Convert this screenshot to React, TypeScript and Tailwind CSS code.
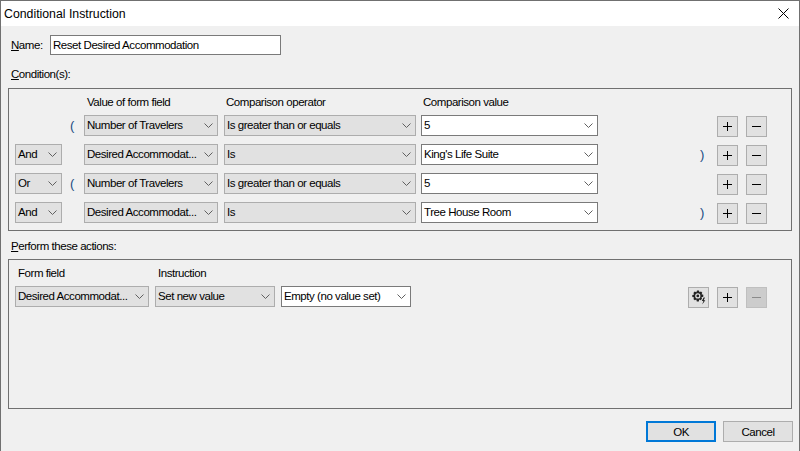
import type { ReactNode } from "react";

function Chevron() {
  return (
    <svg width="9" height="5" viewBox="0 0 9 5" className="shrink-0">
      <path d="M0.5 0.5 L4.5 4.5 L8.5 0.5" fill="none" stroke="#606060" strokeWidth="1" />
    </svg>
  );
}

function Select({ value, width, white }: { value: string; width: string; white?: boolean }) {
  return (
    <div
      className={`flex h-[21px] shrink-0 items-center justify-between border pl-[2px] pr-[4px] ${width} ${
        white ? "border-[#7a7a7a] bg-white" : "border-[#adadad] bg-[#e1e1e1]"
      }`}
    >
      <span className="-translate-y-px whitespace-nowrap">{value}</span>
      <Chevron />
    </div>
  );
}

function IconButton({ children, disabled }: { children: ReactNode; disabled?: boolean }) {
  return (
    <div
      className={`flex h-[21px] w-[21px] shrink-0 items-center justify-center border ${
        disabled ? "border-[#bfbfbf] bg-[#cccccc]" : "border-[#adadad] bg-[#e1e1e1]"
      }`}
    >
      {children}
    </div>
  );
}

function Plus() {
  return (
    <svg width="9" height="9" viewBox="0 0 9 9">
      <path d="M4.5 0 V9 M0 4.5 H9" stroke="#000" strokeWidth="1" />
    </svg>
  );
}

function Minus({ color = "#000" }: { color?: string }) {
  return (
    <svg width="9" height="9" viewBox="0 0 9 9">
      <path d="M0 4.5 H9" stroke={color} strokeWidth="1" />
    </svg>
  );
}

function Gear() {
  return (
    <svg width="15" height="15" viewBox="0 0 15 15">
      <path
        d="M6 0.5 H8 L8.4 2.2 L10 1.4 L11.3 2.7 L10.5 4.2 L12.3 4.7 V6.8 L10.5 7.3 L11 8.8 L9.6 10.2 L8.2 9.5 L7.8 11.4 H5.8 L5.3 9.6 L3.8 10.3 L2.4 9 L3.2 7.4 L1.3 7 V4.9 L3.1 4.4 L2.4 2.9 L3.7 1.5 L5.4 2.3 Z"
        fill="#222"
      />
      <circle cx="6.8" cy="5.9" r="2.6" fill="#e1e1e1" />
      <circle cx="6.8" cy="5.9" r="1.4" fill="#222" />
      <path d="M12.6 7.6 L10.8 11 H12.4 L11.2 14.5 L14.3 10.2 H12.7 L14 7.6 Z" fill="#222" />
    </svg>
  );
}

type Row = {
  join?: string;
  open?: boolean;
  field: string;
  op: string;
  value: string;
  close?: boolean;
};

const rows: Row[] = [
  { open: true, field: "Number of Travelers", op: "Is greater than or equals", value: "5" },
  { join: "And", field: "Desired Accommodat...", op: "Is", value: "King's Life Suite", close: true },
  { join: "Or", open: true, field: "Number of Travelers", op: "Is greater than or equals", value: "5" },
  { join: "And", field: "Desired Accommodat...", op: "Is", value: "Tree House Room", close: true },
];

export default function App() {
  return (
    <div
      className="flex h-[451px] w-[800px] flex-col overflow-hidden border border-b-0 border-[#707070] bg-[#f0f0f0] text-[11.5px] leading-[16px] tracking-[-0.45px] text-black"
      style={{ fontFamily: '"Liberation Sans", sans-serif' }}
    >
      <header className="flex h-[25px] shrink-0 items-center justify-between bg-white pl-[3px] pr-[10px] text-[12.3px] tracking-normal">
        <span>Conditional Instruction</span>
        <svg width="11" height="11" viewBox="0 0 11 11">
          <path d="M0.5 0.5 L10.5 10.5 M10.5 0.5 L0.5 10.5" stroke="#000" strokeWidth="1" />
        </svg>
      </header>

      <div className="flex items-center pl-[10px] pt-[9px]">
        <span className="w-[39px]">
          <span className="underline">N</span>ame:
        </span>
        <div className="flex h-[20px] w-[231px] items-center border border-[#7a7a7a] bg-white pl-[2px]">
          Reset Desired Accommodation
        </div>
      </div>

      <div className="pl-[10px] pt-[11px]">
        <span className="underline">C</span>ondition(s):
      </div>

      <section className="ml-[7px] mr-[7px] mt-[6px] h-[143px] border border-[#707070] pl-[6px] pt-[2px]">
        <div className="flex h-[21px] items-center">
          <span className="ml-[72px] w-[139px]">Value of form field</span>
          <span className="w-[197px]">Comparison operator</span>
          <span>Comparison value</span>
        </div>
        <div className="flex flex-col gap-2 pt-[3px]">
          {rows.map((row, i) => (
            <div key={i} className="flex h-[21px] items-center">
              <div className="w-[47px] shrink-0">
                {row.join && <Select value={row.join} width="w-[47px]" />}
              </div>
              <span className="w-[22px] shrink-0 pl-[8px] text-[13px] text-[#174a80]">{row.open ? "(" : ""}</span>
              <Select value={row.field} width="w-[134px]" />
              <div className="w-[6px] shrink-0" />
              <Select value={row.op} width="w-[192px]" />
              <div className="w-[5px] shrink-0" />
              <Select value={row.value} width="w-[177px]" white />
              <span className="w-[119px] shrink-0 pr-[13px] text-right text-[13px] text-[#174a80]">{row.close ? ")" : ""}</span>
              <div className="flex translate-y-[1px] gap-2">
                <IconButton>
                  <Plus />
                </IconButton>
                <IconButton>
                  <Minus />
                </IconButton>
              </div>
            </div>
          ))}
        </div>
      </section>

      <div className="pl-[10px] pt-[7px]">
        <span className="underline">P</span>erform these actions:
      </div>

      <section className="ml-[7px] mr-[7px] mt-[5px] h-[150px] border border-[#707070] pl-[6px] pt-[4px]">
        <div className="flex h-[18px] items-center">
          <span className="ml-[3px] w-[140px]">Form field</span>
          <span>Instruction</span>
        </div>
        <div className="mt-[4px] flex items-start">
          <Select value="Desired Accommodat..." width="w-[134px]" />
          <div className="w-[6px] shrink-0" />
          <Select value="Set new value" width="w-[120px]" />
          <div className="w-[6px] shrink-0" />
          <Select value="Empty (no value set)" width="w-[130px]" white />
          <div className="ml-[277px] mt-[1px] flex gap-2">
            <IconButton>
              <Gear />
            </IconButton>
            <IconButton>
              <Plus />
            </IconButton>
            <IconButton disabled>
              <Minus color="#8a8a8a" />
            </IconButton>
          </div>
        </div>
      </section>

      <footer className="flex justify-end gap-[7px] pr-[6px] pt-[12px]">
        <div className="flex h-[21px] w-[70px] items-center justify-center border-2 border-[#0078d7] bg-[#e1e1e1]">OK</div>
        <div className="flex h-[21px] w-[70px] items-center justify-center border border-[#adadad] bg-[#e1e1e1]">Cancel</div>
      </footer>
    </div>
  );
}
